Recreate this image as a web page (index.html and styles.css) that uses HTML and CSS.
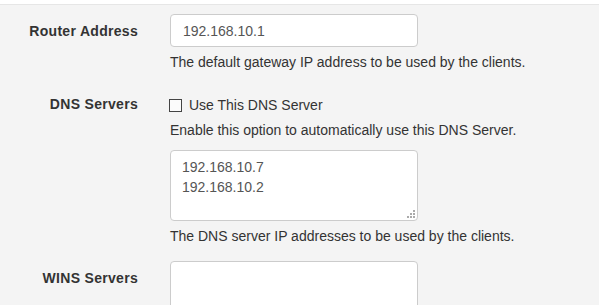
FILE: index.html
```html
<!DOCTYPE html>
<html lang="en">
<head>
    <meta charset="UTF-8">
    <meta name="viewport" content="width=device-width, initial-scale=1.0">
    <title>DHCP Settings</title>
    <link rel="stylesheet" href="styles.css">
</head>
<body>
    <div class="top-bar"></div>
    <form class="settings-form">
        <div class="form-group">
            <label class="control-label" for="router">Router Address</label>
            <div class="control">
                <input class="form-control" id="router" type="text" value="192.168.10.1">
                <p class="help-block">The default gateway IP address to be used by the clients.</p>
            </div>
        </div>

        <div class="form-group">
            <label class="control-label">DNS Servers</label>
            <div class="control">
                <label class="checkbox">
                    <input type="checkbox">
                    <span>Use This DNS Server</span>
                </label>
                <p class="help-block">Enable this option to automatically use this DNS Server.</p>
                <div class="textarea-wrap">
                    <textarea class="form-control">192.168.10.7
192.168.10.2</textarea>
                    <svg class="grip" width="10" height="10" viewBox="0 0 10 10">
                        <rect x="8" y="2" width="2" height="2" fill="#aaa"/>
                        <rect x="5" y="5" width="2" height="2" fill="#aaa"/>
                        <rect x="8" y="5" width="2" height="2" fill="#aaa"/>
                        <rect x="2" y="8" width="2" height="2" fill="#aaa"/>
                        <rect x="5" y="8" width="2" height="2" fill="#aaa"/>
                        <rect x="8" y="8" width="2" height="2" fill="#aaa"/>
                    </svg>
                </div>
                <p class="help-block">The DNS server IP addresses to be used by the clients.</p>
            </div>
        </div>

        <div class="form-group">
            <label class="control-label">WINS Servers</label>
            <div class="control">
                <textarea class="form-control"></textarea>
            </div>
        </div>
    </form>
</body>
</html>
```

FILE: styles.css
```css
* {
    margin: 0;
    padding: 0;
    box-sizing: border-box;
}

body {
    background: #f4f4f4;
    font-family: "Liberation Sans", Arial, sans-serif;
    font-size: 14px;
    line-height: 20px;
    color: #333;
    overflow: hidden;
}

.top-bar {
    height: 5px;
    background: #fff;
    border-bottom: 1px solid #e6e6e6;
}

.settings-form {
    padding-top: 9px;
}

.form-group {
    display: flex;
    gap: 32px;
    margin-bottom: 15px;
}

.control-label {
    width: 138px;
    padding-top: 7px;
    text-align: right;
    font-weight: bold;
    color: #333;
    letter-spacing: 0.3px;
}

.control {
    width: 248px;
}

.form-control {
    display: block;
    width: 100%;
    height: 33px;
    padding: 6px 12px;
    border: 1px solid #ccc;
    border-radius: 4px;
    background: #fff;
    font-family: inherit;
    font-size: 14px;
    line-height: 20px;
    color: #555;
}

textarea.form-control {
    height: 71px;
    padding: 6px 11px;
    resize: none;
}

.help-block {
    margin-top: 5px;
    color: #333;
    white-space: nowrap;
}

.checkbox {
    display: flex;
    align-items: center;
    gap: 7px;
    padding-top: 8px;
    color: #333;
}

.checkbox input {
    appearance: none;
    width: 13px;
    height: 13px;
    margin-left: -1px;
    border: 1px solid #444;
    background: #fbfbfb;
}

.textarea-wrap {
    position: relative;
    margin-top: 10px;
}

.grip {
    position: absolute;
    right: 3px;
    bottom: 3px;
}
```
